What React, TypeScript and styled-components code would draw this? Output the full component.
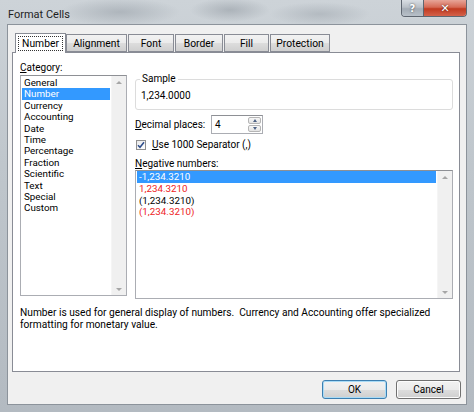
import React from "react";
import styled, { createGlobalStyle } from "styled-components";

const Global = createGlobalStyle`
  html, body { margin: 0; padding: 0; background: #c3c9cf; }
  body { font-family: Roboto, "Open Sans", "DejaVu Sans", sans-serif; }
  * { box-sizing: border-box; }
`;

const Window = styled.div`
  width: 474px;
  height: 412px;
  display: flex;
  flex-direction: column;
  background:
    radial-gradient(ellipse 60px 14px at 120px 12px, rgba(150,158,166,0.55), transparent),
    radial-gradient(ellipse 40px 12px at 230px 10px, rgba(140,148,156,0.5), transparent),
    radial-gradient(ellipse 50px 12px at 320px 14px, rgba(150,158,166,0.45), transparent),
    linear-gradient(180deg, #cdd3d8 0%, #bfc6cc 40%, #b3bac1 100%);
  overflow: hidden;
`;

const TitleBar = styled.div`
  height: 24px;
  display: flex;
  align-items: flex-start;
  padding-left: 8px;
  padding-right: 7px;
`;

const Title = styled.div`
  font-size: 11px;
  color: #1e1e1e;
  line-height: 13px;
  margin-top: 8px;
`;

const Captions = styled.div`
  margin-left: auto;
  display: flex;
  height: 17px;
  border: 1px solid #5e6670;
  border-top: none;
  border-radius: 0 0 4px 4px;
  overflow: hidden;
  box-shadow: 0 0 1px rgba(255,255,255,0.7);
`;

const CapBtn = styled.div<{ $kind: "help" | "close" }>`
  width: ${(p) => (p.$kind === "close" ? 43 : 21)}px;
  height: 100%;
  display: flex;
  align-items: center;
  justify-content: center;
  font-family: "DejaVu Sans", sans-serif;
  font-weight: bold;
  font-size: ${(p) => (p.$kind === "close" ? 11 : 10)}px;
  color: #fff;
  text-shadow: 0 0 2px rgba(0,0,0,0.7);
  background: ${(p) =>
    p.$kind === "close"
      ? "linear-gradient(180deg, #e7a598 0%, #d66a55 45%, #c13a20 55%, #d4624a 100%)"
      : "linear-gradient(180deg, #d9dee3 0%, #b9c0c7 45%, #a3acb5 55%, #b8c0c8 100%)"};
  border-left: ${(p) => (p.$kind === "close" ? "1px solid #5e6670" : "none")};
`;

const Client = styled.div`
  flex: 1;
  margin: 0 7px 7px 7px;
  background: #f0f0f0;
  border: 1px solid #8c939b;
  display: flex;
  flex-direction: column;
`;

const TabStrip = styled.div`
  display: flex;
  align-items: flex-end;
  height: 27px;
  padding-left: 7px;
  position: relative;
  z-index: 1;
`;

const Tab = styled.div<{ $active?: boolean; $w: number }>`
  width: ${(p) => p.$w}px;
  height: ${(p) => (p.$active ? 20 : 18)}px;
  margin-bottom: ${(p) => (p.$active ? -1 : 0)}px;
  margin-right: ${(p) => (p.$active ? 0 : 1)}px;
  border: 1px solid #898c95;
  border-bottom: ${(p) => (p.$active ? "none" : "1px solid #898c95")};
  background: ${(p) =>
    p.$active ? "#ffffff" : "linear-gradient(180deg, #f2f2f2 0%, #ebebeb 50%, #dddddd 51%, #cfcfcf 100%)"};
  display: flex;
  align-items: center;
  justify-content: center;
  font-size: 10.3px;
  color: #000;
  padding-top: ${(p) => (p.$active ? 0 : 1)}px;
`;

const FocusLabel = styled.span`
  outline: 1px dotted #333;
  outline-offset: 0px;
  padding: 0 3px;
  line-height: 13px;
`;

const Panel = styled.div`
  height: 320px;
  margin: 0 6px 0 4px;
  background: #ffffff;
  border: 1px solid #898c95;
  display: flex;
  flex-direction: column;
  padding: 0 6px 0 7px;
`;

const Columns = styled.div`
  display: flex;
  gap: 8px;
`;

const LeftCol = styled.div`
  width: 107px;
  display: flex;
  flex-direction: column;
`;

const RightCol = styled.div`
  flex: 1;
  display: flex;
  flex-direction: column;
  padding-top: 21px;
`;

const Label = styled.div<{ $mt?: number; $w?: number }>`
  font-size: 10px;
  line-height: 12px;
  color: #000;
  margin-top: ${(p) => p.$mt ?? 0}px;
  width: ${(p) => (p.$w ? `${p.$w}px` : "auto")};
  white-space: nowrap;
`;

const U = styled.span`
  text-decoration: underline;
  text-underline-offset: 1px;
`;

const ListBox = styled.div<{ $h: number; $mt?: number }>`
  height: ${(p) => p.$h}px;
  margin-top: ${(p) => p.$mt ?? 0}px;
  border: 1px solid #abadb3;
  border-top-color: #8e9095;
  background: #fff;
  display: flex;
`;

const ListItems = styled.div<{ $pt: number }>`
  flex: 1;
  padding: ${(p) => p.$pt}px 1px 0 1px;
  display: flex;
  flex-direction: column;
`;

const Item = styled.div<{ $sel?: boolean; $red?: boolean; $h: number }>`
  height: ${(p) => p.$h}px;
  line-height: ${(p) => p.$h}px;
  font-size: 9.8px;
  padding-left: 2px;
  white-space: nowrap;
  background: ${(p) => (p.$sel ? "#3399ff" : "transparent")};
  color: ${(p) => (p.$sel ? "#fff" : p.$red ? "#ee1c25" : "#000")};
`;

const ScrollBar = styled.div`
  width: 15px;
  background: #f0f0f0;
  border-left: 1px solid #f5f5f5;
  display: flex;
  flex-direction: column;
  justify-content: space-between;
  align-items: center;
  padding: 5px 0 4px;
`;

const Arrow = styled.div<{ $down?: boolean }>`
  width: 0;
  height: 0;
  border-left: 3px solid transparent;
  border-right: 3px solid transparent;
  ${(p) => (p.$down ? "border-top: 3px solid #a6a6a6;" : "border-bottom: 3px solid #a6a6a6;")}
`;

const GroupBox = styled.div`
  position: relative;
  height: 31px;
  margin-top: 5px;
  border: 1px solid #dcdcdc;
  border-radius: 3px;
  padding: 10px 0 0 5px;
`;

const GroupLegend = styled.div`
  position: absolute;
  top: -7px;
  left: 4px;
  padding: 0 2px;
  background: #fff;
  font-size: 10px;
  line-height: 12px;
`;

const Value = styled.div`
  font-size: 10px;
  line-height: 12px;
`;

const SpinRow = styled.div`
  display: flex;
  align-items: center;
  margin-top: 5px;
  height: 19px;
`;

const SpinBox = styled.div`
  width: 52px;
  height: 19px;
  border: 1px solid #abadb3;
  border-top-color: #8e9095;
  display: flex;
  background: #fff;
`;

const SpinValue = styled.div`
  flex: 1;
  font-size: 10px;
  line-height: 17px;
  padding-left: 3px;
`;

const SpinButtons = styled.div`
  width: 15px;
  display: flex;
  flex-direction: column;
  padding: 1px;
  gap: 1px;
`;

const SpinBtn = styled.div`
  flex: 1;
  border: 1px solid #b5b5b5;
  border-radius: 2px;
  background: linear-gradient(180deg, #f7f7f7, #e3e3e3);
  display: flex;
  align-items: center;
  justify-content: center;
`;

const SmallArrow = styled.div<{ $down?: boolean }>`
  width: 0;
  height: 0;
  border-left: 2.5px solid transparent;
  border-right: 2.5px solid transparent;
  ${(p) => (p.$down ? "border-top: 3px solid #4d6185;" : "border-bottom: 3px solid #4d6185;")}
`;

const CheckRow = styled.div`
  display: flex;
  align-items: center;
  gap: 6px;
  margin-top: 5px;
  height: 12px;
`;

const CheckBox = styled.div`
  width: 10px;
  height: 10px;
  border: 1px solid #8f8f8f;
  background: linear-gradient(135deg, #e9e9e9, #ffffff);
  display: flex;
  align-items: center;
  justify-content: center;
  margin-left: 1px;
`;

const Description = styled.div`
  margin-top: 8px;
  font-size: 10.2px;
  line-height: 11.7px;
  color: #000;
`;

const ButtonRow = styled.div`
  display: flex;
  justify-content: flex-end;
  gap: 9px;
  padding: 8px 5px 0 0;
`;

const Button = styled.div<{ $default?: boolean }>`
  width: 65px;
  height: 19px;
  border: 1px solid ${(p) => (p.$default ? "#3c7fb1" : "#707070")};
  border-radius: 3px;
  background: linear-gradient(180deg, #f2f2f2 0%, #ebebeb 50%, #dddddd 51%, #cfcfcf 100%);
  box-shadow: ${(p) => (p.$default ? "inset 0 0 0 1px #a9dbf6" : "inset 0 0 0 1px #fcfcfc")};
  display: flex;
  align-items: center;
  justify-content: center;
  font-size: 10px;
  color: #000;
`;

const categories = [
  "General", "Number", "Currency", "Accounting", "Date", "Time",
  "Percentage", "Fraction", "Scientific", "Text", "Special", "Custom",
];

const negatives: { text: string; red: boolean }[] = [
  { text: "-1,234.3210", red: false },
  { text: "1,234.3210", red: true },
  { text: "(1,234.3210)", red: false },
  { text: "(1,234.3210)", red: true },
];

export default function App() {
  return (
    <>
      <Global />
      <Window>
        <TitleBar>
          <Title>Format Cells</Title>
          <Captions>
            <CapBtn $kind="help">?</CapBtn>
            <CapBtn $kind="close">✕</CapBtn>
          </Captions>
        </TitleBar>
        <Client>
          <TabStrip>
            <Tab $active $w={51}><FocusLabel>Number</FocusLabel></Tab>
            <Tab $w={61}>Alignment</Tab>
            <Tab $w={46}>Font</Tab>
            <Tab $w={48}>Border</Tab>
            <Tab $w={45}>Fill</Tab>
            <Tab $w={60}>Protection</Tab>
          </TabStrip>
          <Panel>
            <Columns>
              <LeftCol>
                <Label $mt={9}><U>C</U>ategory:</Label>
                <ListBox $h={221} $mt={1}>
                  <ListItems $pt={1}>
                    {categories.map((c) => (
                      <Item key={c} $h={11.4} $sel={c === "Number"}>{c}</Item>
                    ))}
                  </ListItems>
                  <ScrollBar>
                    <Arrow />
                    <Arrow $down />
                  </ScrollBar>
                </ListBox>
              </LeftCol>
              <RightCol>
                <GroupBox>
                  <GroupLegend>Sample</GroupLegend>
                  <Value>1,234.0000</Value>
                </GroupBox>
                <SpinRow>
                  <Label $w={76}><U>D</U>ecimal places:</Label>
                  <SpinBox>
                    <SpinValue>4</SpinValue>
                    <SpinButtons>
                      <SpinBtn><SmallArrow /></SpinBtn>
                      <SpinBtn><SmallArrow $down /></SpinBtn>
                    </SpinButtons>
                  </SpinBox>
                </SpinRow>
                <CheckRow>
                  <CheckBox>
                    <svg width="8" height="8" viewBox="0 0 8 8">
                      <path d="M1 4.2 L3 6.3 L7 1.2" fill="none" stroke="#2d4c8a" strokeWidth="1.5" />
                    </svg>
                  </CheckBox>
                  <Label><U>U</U>se 1000 Separator (,)</Label>
                </CheckRow>
                <Label $mt={7}><U>N</U>egative numbers:</Label>
                <ListBox $h={129} $mt={0}>
                  <ListItems $pt={0}>
                    {negatives.map((n, i) => (
                      <Item key={i} $h={i === 0 ? 12 : 11.7} $sel={i === 0} $red={n.red}>{n.text}</Item>
                    ))}
                  </ListItems>
                  <ScrollBar>
                    <Arrow />
                    <Arrow $down />
                  </ScrollBar>
                </ListBox>
              </RightCol>
            </Columns>
            <Description>
              Number is used for general display of numbers.&nbsp; Currency and Accounting offer specialized
              formatting for monetary value.
            </Description>
          </Panel>
          <ButtonRow>
            <Button $default>OK</Button>
            <Button>Cancel</Button>
          </ButtonRow>
        </Client>
      </Window>
    </>
  );
}
